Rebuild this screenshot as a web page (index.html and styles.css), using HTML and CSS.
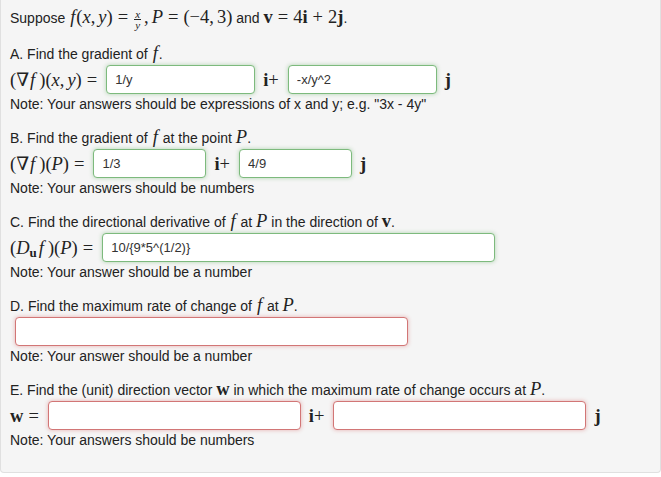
FILE: index.html
```html
<!DOCTYPE html>
<html lang="en">
<head>
    <meta charset="UTF-8">
    <meta name="viewport" content="width=device-width, initial-scale=1.0">
    <title>Gradient problem</title>
    <link rel="stylesheet" href="styles.css">
</head>
<body>
    <div class="problem">
        <p class="intro">Suppose <span class="m"><i class="f">f</i>(<i>x</i><span class="c">,</span><i>y</i>)<span class="eq">=</span><span class="frac"><i>x</i><i class="den">y</i></span><span class="c">,</span><i>P</i><span class="eq">=</span>(&minus;4<span class="c">,</span>3)</span> and <span class="m"><b>v</b><span class="eq">=</span>4<b>i</b><span class="eq">+</span>2<b>j</b></span>.</p>

        <div class="part">
            <div class="q">A. Find the gradient of <span class="m"><i class="f">f</i></span>.</div>
            <div class="row">
                <span class="m">(&nabla;<i class="f wide">f</i>)(<i>x</i><span class="c">,</span><i>y</i>)<span class="eq">=</span></span>
                <input type="text" class="ans correct w149" value="1/y">
                <span class="m unit"><b>i</b>+</span>
                <input type="text" class="ans correct w149" value="-x/y^2">
                <span class="m unit"><b>j</b></span>
            </div>
            <div class="note">Note: Your answers should be expressions of x and y; e.g. "3x - 4y"</div>
        </div>

        <div class="part">
            <div class="q">B. Find the gradient of <span class="m"><i class="f">f</i></span> at the point <span class="m"><i>P</i></span>.</div>
            <div class="row">
                <span class="m">(&nabla;<i class="f wide">f</i>)(<i>P</i>)<span class="eq">=</span></span>
                <input type="text" class="ans correct w113" value="1/3">
                <span class="m unit"><b>i</b>+</span>
                <input type="text" class="ans correct w113" value="4/9">
                <span class="m unit"><b>j</b></span>
            </div>
            <div class="note">Note: Your answers should be numbers</div>
        </div>

        <div class="part">
            <div class="q">C. Find the directional derivative of <span class="m"><i class="f">f</i></span> at <span class="m"><i>P</i></span> in the direction of <span class="m"><b>v</b></span>.</div>
            <div class="row">
                <span class="m">(<i>D</i><sub><b>u</b></sub><i class="f wide">f</i>)(<i>P</i>)<span class="eq">=</span></span>
                <input type="text" class="ans correct w393" value="10/{9*5^(1/2)}">
            </div>
            <div class="note">Note: Your answer should be a number</div>
        </div>

        <div class="part">
            <div class="q">D. Find the maximum rate of change of <span class="m"><i class="f">f</i></span> at <span class="m"><i>P</i></span>.</div>
            <div class="row">
                <input type="text" class="ans incorrect w393" value="">
            </div>
            <div class="note">Note: Your answer should be a number</div>
        </div>

        <div class="part">
            <div class="q">E. Find the (unit) direction vector <span class="m"><b>w</b></span> in which the maximum rate of change occurs at <span class="m"><i>P</i></span>.</div>
            <div class="row">
                <span class="m"><b>w</b><span class="eq">=</span></span>
                <input type="text" class="ans incorrect w253" value="">
                <span class="m unit"><b>i</b>+</span>
                <input type="text" class="ans incorrect w253" value="">
                <span class="m unit"><b>j</b></span>
            </div>
            <div class="note">Note: Your answers should be numbers</div>
        </div>
    </div>
</body>
</html>
```

FILE: styles.css
```css
body {
    margin: 0;
    background-color: #fff;
    font-family: "Liberation Sans", Arial, sans-serif;
    font-size: 14px;
    color: #222;
}
.problem {
    background-color: #f5f5f5;
    border: 1px solid #e0e0e0;
    border-top: none;
    border-radius: 0 0 4px 4px;
    padding: 8px 10px 18px 9px;
    height: 473px;
    box-sizing: border-box;
}
.intro {
    margin: 0 0 16px;
    height: 20px;
    line-height: 20px;
}
.m {
    font-family: "Liberation Serif", "DejaVu Serif", serif;
    font-size: 18.5px;
    line-height: 18px;
    white-space: nowrap;
}
.m i {
    font-style: italic;
}
.m i.f {
    margin: 0 1px 0 1px;
}
.m i.f.wide {
    margin-right: 4px;
}
.m b {
    font-weight: bold;
}
.m .c {
    margin-right: 3px;
}
.m .eq {
    margin: 0 5px;
}
.m sub {
    font-size: 13px;
    vertical-align: -3px;
    line-height: 0;
    margin-right: 1px;
}
.frac {
    display: inline-flex;
    flex-direction: column;
    align-items: center;
    vertical-align: middle;
    font-size: 11px;
    line-height: 10px;
    margin: 0 3px 0 1px;
    position: relative;
    top: 1px;
}
.frac .den {
    border-top: 1px solid #222;
    padding: 0 1px;
}
.part {
    margin-bottom: 14px;
}
.q, .note {
    height: 20px;
    line-height: 20px;
    white-space: nowrap;
}
.row {
    display: flex;
    align-items: center;
    height: 30px;
    padding-top: 1px;
    box-sizing: border-box;
}
.ans {
    height: 29px;
    box-sizing: border-box;
    border: 1px solid #ccc;
    border-radius: 4px;
    background-color: #fff;
    font-family: "Liberation Sans", Arial, sans-serif;
    font-size: 13px;
    color: #333;
    padding: 0 8px;
    margin: 0 8px 0 4px;
    outline: none;
}
.row .ans:first-child {
    margin-left: 5px;
}
.correct {
    border-color: #7dba7d;
    box-shadow: 0 0 4px rgba(90, 170, 90, 0.45);
}
.incorrect {
    border-color: #d27676;
    box-shadow: 0 0 4px rgba(210, 90, 90, 0.45);
}
.unit {
    margin: 0 7px 0 0;
}
.unit + .ans {
    margin-left: 2px;
}
.w149 { width: 149px; }
.w113 { width: 113px; }
.w393 { width: 393px; }
.w253 { width: 253px; }
```
